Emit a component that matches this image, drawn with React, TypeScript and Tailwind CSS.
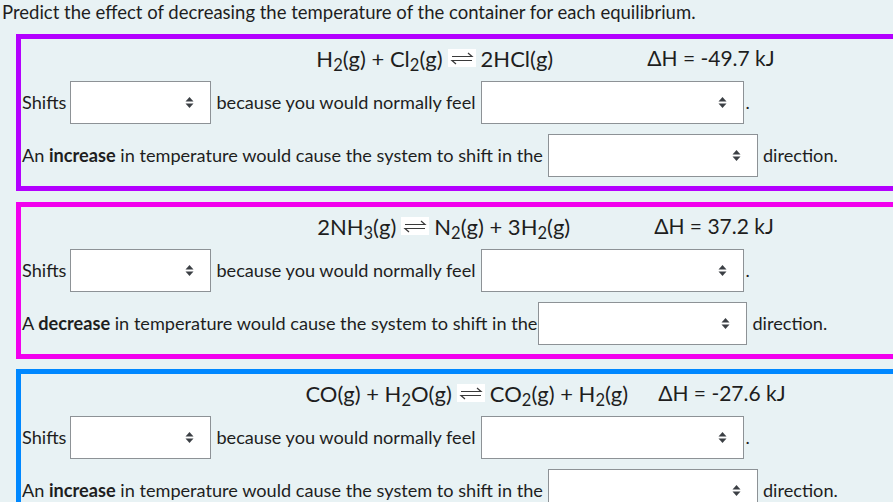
import React from 'react';

const EqArrow: React.FC = () => (
  <svg width="28" height="18" viewBox="0 0 28 18" className="mx-[5px] shrink-0">
    <rect width="28" height="18" fill="#ffffff" />
    <path d="M4 7.5H24L20 4" fill="none" stroke="#3a3a3a" strokeWidth="1.2" />
    <path d="M24 11.5H4L8 15" fill="none" stroke="#3a3a3a" strokeWidth="1.2" />
  </svg>
);

const SortIcon: React.FC = () => (
  <svg width="9" height="13" viewBox="0 0 9 13" className="shrink-0">
    <path d="M0.5 5.5L4.5 1L8.5 5.5Z" fill="#3b3f44" />
    <path d="M0.5 7.5L4.5 12L8.5 7.5Z" fill="#3b3f44" />
  </svg>
);

// fake select box, native one renders differently per platform
const Dropdown: React.FC<{ className: string }> = ({ className }) => (
  <div className={`h-[43px] bg-white border border-[#8d9296] flex items-center justify-end pr-[16px] shrink-0 ${className}`}>
    <SortIcon />
  </div>
);

const Sub: React.FC<{ children: React.ReactNode }> = ({ children }) => <sub>{children}</sub>;

type Item = {
  border: string;
  equation: React.ReactNode;
  gap: string;
  dh: string;
  change: 'increase' | 'decrease';
  tight: boolean;
  spacing: string;
};

const items: Item[] = [
  {
    border: 'border-[#b300ff]',
    equation: (
      <>
        <span>H<Sub>2</Sub>(g) + Cl<Sub>2</Sub>(g)</span>
        <EqArrow />
        <span>2HCl(g)</span>
      </>
    ),
    gap: 'ml-[94px]',
    dh: 'ΔH = -49.7 kJ',
    change: 'increase',
    tight: false,
    spacing: 'mb-[11px]',
  },
  {
    border: 'border-[#f200ee]',
    equation: (
      <>
        <span>2NH<Sub>3</Sub>(g)</span>
        <EqArrow />
        <span>N<Sub>2</Sub>(g) + 3H<Sub>2</Sub>(g)</span>
      </>
    ),
    gap: 'ml-[84px]',
    dh: 'ΔH = 37.2 kJ',
    change: 'decrease',
    tight: true,
    spacing: 'mb-[10px]',
  },
  {
    border: 'border-[#0088ff]',
    equation: (
      <>
        <span>CO(g) + H<Sub>2</Sub>O(g)</span>
        <EqArrow />
        <span>CO<Sub>2</Sub>(g) + H<Sub>2</Sub>(g)</span>
      </>
    ),
    gap: 'ml-[30px]',
    dh: 'ΔH = -27.6 kJ',
    change: 'increase',
    tight: false,
    spacing: 'mb-[10px]',
  },
];

export default function App() {
  return (
    <div
      className="w-full h-[502px] overflow-hidden bg-[#e8f2f4] text-[#1e1e1e] text-[18.15px]"
      style={{ fontFamily: 'Lato, "Open Sans", sans-serif' }}
    >
      <p className="pl-[2px] h-[34px] leading-[24px] text-[18.5px]">
        Predict the effect of decreasing the temperature of the container for each equilibrium.
      </p>

      {items.map((item, i) => (
        <div
          key={i}
          className={`ml-[16px] w-[1058px] h-[157px] border-[5px] ${item.border} ${item.spacing} pl-[1px]`}
        >
          {/* Equation */}
          <div className="h-[38px] flex items-center justify-center text-[22px] whitespace-nowrap">
            {item.equation}
            <span className={`${item.gap} text-[21px]`}>{item.dh}</span>
          </div>

          {/* Shifts row */}
          <div className="mt-[4px] flex items-center whitespace-nowrap">
            <span>Shifts</span>
            <Dropdown className="w-[141px] ml-[4px] mr-[5px]" />
            <span>because you would normally feel</span>
            <Dropdown className="w-[263px] ml-[5px]" />
            <span className="ml-[2px]">.</span>
          </div>

          {/* Direction row */}
          <div className="mt-[10px] flex items-center whitespace-nowrap">
            <span>
              {item.change === 'increase' ? 'An ' : 'A '}
              <b className="font-bold">{item.change}</b> in temperature would cause the system to shift in the
            </span>
            <Dropdown className={item.tight ? 'w-[209px] ml-[1px] mr-[5px]' : 'w-[210px] ml-[5px] mr-[5px]'} />
            <span>direction.</span>
          </div>
        </div>
      ))}
    </div>
  );
}
